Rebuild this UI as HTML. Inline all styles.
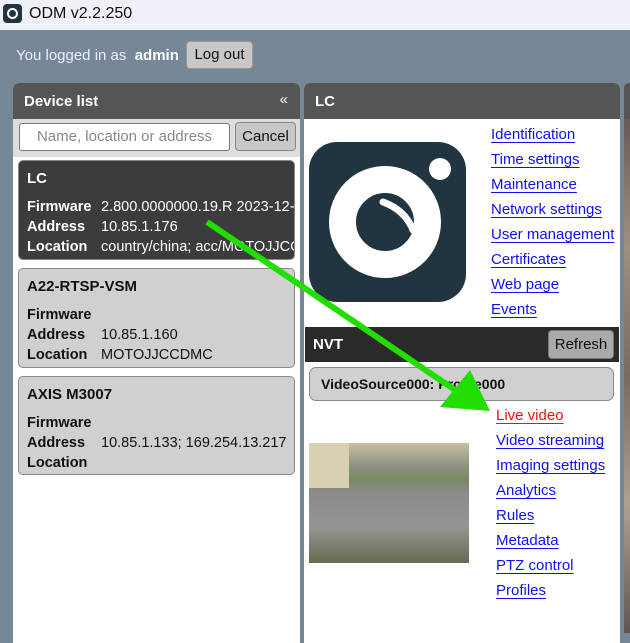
<!DOCTYPE html>
<html><head><style>
*{box-sizing:border-box;margin:0;padding:0}
body{width:630px;height:633px;overflow:hidden;background:#778797;font-family:"Liberation Sans",sans-serif;font-size:15px;position:relative}
.abs{position:absolute}
a{color:#1010ee;text-decoration:underline;text-underline-offset:3px}
.lnk{position:absolute;left:0;font-size:15px;line-height:25px;white-space:nowrap}
.card{position:absolute;left:18px;width:277px;border-radius:5px;border:1px solid #888;padding:8px 8px;font-size:14.5px;line-height:20px;overflow:hidden;white-space:nowrap}
.card b{display:inline-block;width:70px}
.card .t{font-weight:bold;margin-bottom:8px;font-size:15px}
</style></head><body>
<div class="abs" style="left:0;top:0;width:630px;height:30px;background:#eef2f8"></div>
<div class="abs" style="left:3px;top:4px;width:19px;height:19px;background:#203540;border-radius:4px"></div>
<div class="abs" style="left:7px;top:8px;width:11px;height:11px;border:2.5px solid #fff;border-radius:50%"></div>
<div class="abs" style="left:29px;top:5px;font-size:16px;color:#111">ODM v2.2.250</div>
<div class="abs" style="left:16px;top:47px;color:#eef;font-size:15px">You logged in as&nbsp; <b style="color:#fff">admin</b></div>
<div class="abs" style="left:186px;top:41px;width:67px;height:28px;background:#c8c8c8;border:1px solid #999;border-radius:4px;text-align:center;line-height:26px;color:#111">Log out</div>

<!-- device list -->
<div class="abs" style="left:13px;top:83px;width:287px;height:560px;background:#fff;border-radius:6px 6px 0 0;overflow:hidden">
<div style="height:36px;background:#555;color:#fff;font-weight:bold;padding:10px 0 0 11px;position:relative">Device list<span style="position:absolute;right:12px;top:8px;font-weight:normal;font-size:15px">«</span></div>
<div style="height:38px;background:#ddd"></div>
</div>
<div class="abs" style="left:19px;top:123px;width:211px;height:28px;background:#fff;border:1px solid #777;border-radius:3px;text-align:center;line-height:26px;color:#888">Name, location or address</div>
<div class="abs" style="left:235px;top:122px;width:61px;height:29px;background:#c8c8c8;border:1px solid #888;border-radius:4px;text-align:center;line-height:27px;color:#111">Cancel</div>
<div class="card" style="top:160px;height:100px;background:#3c3c3c;color:#fff"><div class="t">LC</div><b>Firmware</b> 2.800.0000000.19.R 2023-12-<br><b>Address</b> 10.85.1.176<br><b>Location</b> country/china; acc/MOTOJJCC</div>
<div class="card" style="top:268px;height:100px;background:#d0d0d0;color:#111"><div class="t">A22-RTSP-VSM</div><b>Firmware</b><br><b>Address</b> 10.85.1.160<br><b>Location</b> MOTOJJCCDMC</div>
<div class="card" style="top:376px;height:99px;background:#d0d0d0;color:#111"><div class="t">AXIS M3007</div><b>Firmware</b><br><b>Address</b> 10.85.1.133; 169.254.13.217<br><b>Location</b></div>

<!-- right panel -->
<div class="abs" style="left:304px;top:83px;width:316px;height:560px;background:#fff;border-radius:6px 6px 0 0;overflow:hidden">
<div style="height:36px;background:#555;color:#fff;font-weight:bold;padding:10px 0 0 11px">LC</div>
</div>
<div class="abs" style="left:624px;top:83px;width:10px;height:36px;background:#555;border-radius:5px 0 0 0"></div>
<div class="abs" style="left:624px;top:119px;width:6px;height:514px;background:linear-gradient(#6a5a55,#a09080,#7a6a60,#b0a090,#605550)"></div>
<svg class="abs" style="left:309px;top:142px" width="157" height="160" viewBox="0 0 157 160">
<rect width="157" height="160" rx="28" fill="#203540"/>
<circle cx="76" cy="80" r="42.5" fill="none" stroke="#fff" stroke-width="27"/>
<circle cx="131" cy="27" r="11" fill="#fff"/>
<path d="M74 60 Q96 68 104 88" stroke="#fff" stroke-width="7" fill="none" stroke-linecap="round"/>
</svg>
<div class="abs" style="left:491px;top:122px">
<a class="lnk" style="top:0">Identification</a><a class="lnk" style="top:25px">Time settings</a><a class="lnk" style="top:50px">Maintenance</a><a class="lnk" style="top:75px">Network settings</a><a class="lnk" style="top:100px">User management</a><a class="lnk" style="top:125px">Certificates</a><a class="lnk" style="top:150px">Web page</a><a class="lnk" style="top:175px">Events</a>
</div>
<div class="abs" style="left:305px;top:327px;width:314px;height:35px;background:#2a2a2a;color:#fff;font-weight:bold;padding:9px 0 0 8px">NVT</div>
<div class="abs" style="left:548px;top:330px;width:66px;height:29px;background:#aaa;border:1px solid #777;border-radius:4px;text-align:center;line-height:27px;color:#111">Refresh</div>
<div class="abs" style="left:309px;top:367px;width:305px;height:34px;background:#d0d0d0;border:1px solid #888;border-radius:7px;font-weight:bold;font-size:14px;padding:8px 0 0 11px;color:#111">VideoSource000: Profile000</div>
<div class="abs" style="left:496px;top:403px">
<a class="lnk" style="top:0;color:#f01010">Live video</a><a class="lnk" style="top:25px">Video streaming</a><a class="lnk" style="top:50px">Imaging settings</a><a class="lnk" style="top:75px">Analytics</a><a class="lnk" style="top:100px">Rules</a><a class="lnk" style="top:125px">Metadata</a><a class="lnk" style="top:150px">PTZ control</a><a class="lnk" style="top:175px">Profiles</a>
</div>
<div class="abs" style="left:309px;top:443px;width:160px;height:120px;background:linear-gradient(180deg,#c8c0a0 0%,#8a9080 20%,#7a8a60 30%,#8a8a8a 40%,#959595 70%,#6a6a50 100%)"></div>
<div class="abs" style="left:309px;top:443px;width:40px;height:45px;background:#d8d0b0"></div>
<svg class="abs" style="left:0;top:0" width="630" height="633">
<line x1="207" y1="222" x2="455" y2="390" stroke="#22dd00" stroke-width="6"/>
<polygon points="490,411 440,407 470,370" fill="#22dd00"/>
</svg>
</body></html>
